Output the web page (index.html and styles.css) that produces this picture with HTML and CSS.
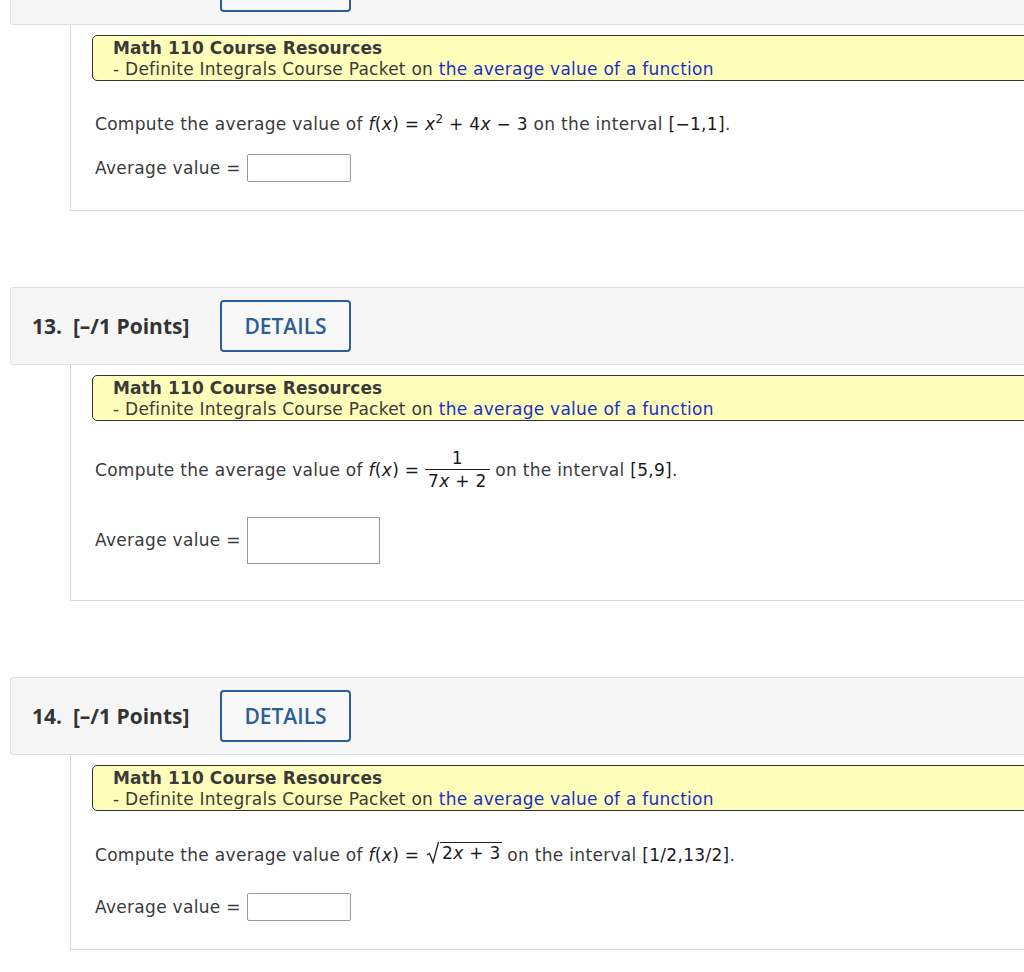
FILE: index.html
```html
<!DOCTYPE html>
<html>
<head>
<meta charset="utf-8">
<link rel="stylesheet" href="styles.css">
</head>
<body>
<div class="page">

  <div class="question first">
    <div class="qhead">
      <span class="qnum">12.&nbsp; [–/1 Points]</span>
      <button class="details">DETAILS</button>
    </div>
    <div class="qbody">
      <div class="resource">
        <div class="res-title">Math 110 Course Resources</div>
        <div class="res-line">- Definite Integrals Course Packet on <a href="#">the average value of a function</a></div>
      </div>
      <p class="prompt">Compute the average value of <span class="m"><i>f</i>(<i>x</i>) = <i>x</i><sup>2</sup> + 4<i>x</i> − 3</span> on the interval <span class="m">[−1,1]</span>.</p>
      <div class="answer">Average value = <span class="field"></span></div>
    </div>
  </div>

  <div class="question">
    <div class="qhead">
      <span class="qnum">13.&nbsp; [–/1 Points]</span>
      <button class="details">DETAILS</button>
    </div>
    <div class="qbody">
      <div class="resource">
        <div class="res-title">Math 110 Course Resources</div>
        <div class="res-line">- Definite Integrals Course Packet on <a href="#">the average value of a function</a></div>
      </div>
      <p class="prompt frac-line">Compute the average value of <span class="m"><i>f</i>(<i>x</i>) = </span><span class="frac"><span class="num">1</span><span class="den">7<i>x</i> + 2</span></span> on the interval <span class="m">[5,9]</span>.</p>
      <div class="answer big">Average value = <span class="field big"></span></div>
    </div>
  </div>

  <div class="question">
    <div class="qhead">
      <span class="qnum">14.&nbsp; [–/1 Points]</span>
      <button class="details">DETAILS</button>
    </div>
    <div class="qbody">
      <div class="resource">
        <div class="res-title">Math 110 Course Resources</div>
        <div class="res-line">- Definite Integrals Course Packet on <a href="#">the average value of a function</a></div>
      </div>
      <p class="prompt sqrt-line">Compute the average value of <span class="m"><i>f</i>(<i>x</i>) = </span><span class="sqrt"><svg class="rad" width="14" height="23" viewBox="0 0 14 23"><path d="M1 14 L3.5 12.5 L7 21.5 L12.5 1" fill="none" stroke="#222" stroke-width="1.3"/></svg><span class="radicand">2<i>x</i> + 3</span></span> on the interval <span class="m">[1/2,13/2]</span>.</p>
      <div class="answer sq">Average value = <span class="field"></span></div>
    </div>
  </div>

</div>
</body>
</html>
```

FILE: styles.css
```css
html, body {
  margin: 0;
  padding: 0;
  background: #fff;
  overflow: hidden;
}

.page {
  width: 1200px;
  padding-left: 10px;
  font-family: "DejaVu Sans", Verdana, sans-serif;
  font-size: 17px;
  letter-spacing: 0.3px;
  color: #3a3a3a;
}

.question {
  margin-bottom: 76px;
}

.question.first {
  margin-top: -53px;
}

.qhead {
  box-sizing: border-box;
  height: 78px;
  background: #f6f6f6;
  border: 1px solid #dedede;
  border-radius: 3px;
  display: flex;
  align-items: center;
  padding-left: 21px;
  letter-spacing: 0;
}

.qnum {
  font-family: "Open Sans", sans-serif;
  font-weight: 700;
  font-size: 21px;
  color: #333;
  width: 188px;
}

.details {
  box-sizing: border-box;
  width: 131px;
  height: 52px;
  border: 2px solid #2c5f97;
  border-radius: 4px;
  background: #f8f8f8;
  color: #2c5f97;
  font-family: "Open Sans", sans-serif;
  font-weight: 600;
  font-size: 21px;
  padding: 0;
  margin-top: 0;
}

.qbody {
  margin-left: 60px;
  border-left: 1px solid #d6d6d6;
  border-bottom: 1px solid #d6d6d6;
  padding: 10px 0 28px 21px;
}

.resource {
  background: #ffffbb;
  border: 1px solid #333;
  border-radius: 5px;
  padding: 2px 0 0 20px;
  line-height: 21px;
  color: #3a3a3a;
  letter-spacing: 0.25px;
}

.res-title {
  font-weight: 700;
  letter-spacing: 0.1px;
}

.resource a {
  color: #1a2fc9;
  text-decoration: none;
}

.prompt {
  margin: 33px 0 0 3px;
  line-height: 21px;
}

.m {
  color: #1a1a1a;
}

.m i, .frac i, .sqrt i {
  font-style: italic;
}

sup {
  font-size: 12px;
  line-height: 0;
  vertical-align: 7px;
}

.frac-line {
  margin-top: 28px;
  line-height: 42px;
}

.frac {
  display: inline-flex;
  flex-direction: column;
  align-items: center;
  vertical-align: middle;
  line-height: 21px;
  color: #1a1a1a;
  margin: -2px 0 0 0;
}

.frac .num {
  padding: 0 4px 0;
}

.frac .den {
  border-top: 1px solid #1a1a1a;
  padding: 1px 3px 0;
  align-self: stretch;
  text-align: center;
}

.sqrt-line {
  margin-top: 30px;
  line-height: 24px;
}

.sqrt {
  display: inline-flex;
  align-items: flex-end;
  vertical-align: -3px;
  color: #1a1a1a;
  margin-left: 1px;
  line-height: 21px;
}

.sqrt .rad {
  display: block;
}

.radicand {
  border-top: 1.3px solid #222;
  padding: 0 1px 0 2px;
  margin-top: 1px;
}

.answer {
  margin: 19px 0 0 3px;
  display: flex;
  align-items: center;
  line-height: 21px;
}

.answer.big {
  margin-top: 25px;
  padding-bottom: 8px;
}

.answer.sq {
  margin-top: 26px;
}

.field {
  display: inline-block;
  box-sizing: border-box;
  width: 104px;
  height: 28px;
  border: 1px solid #9a9a9a;
  border-radius: 2px;
  background: #fff;
  margin-left: 6px;
}

.field.big {
  width: 133px;
  height: 47px;
  border-radius: 0;
}
```
